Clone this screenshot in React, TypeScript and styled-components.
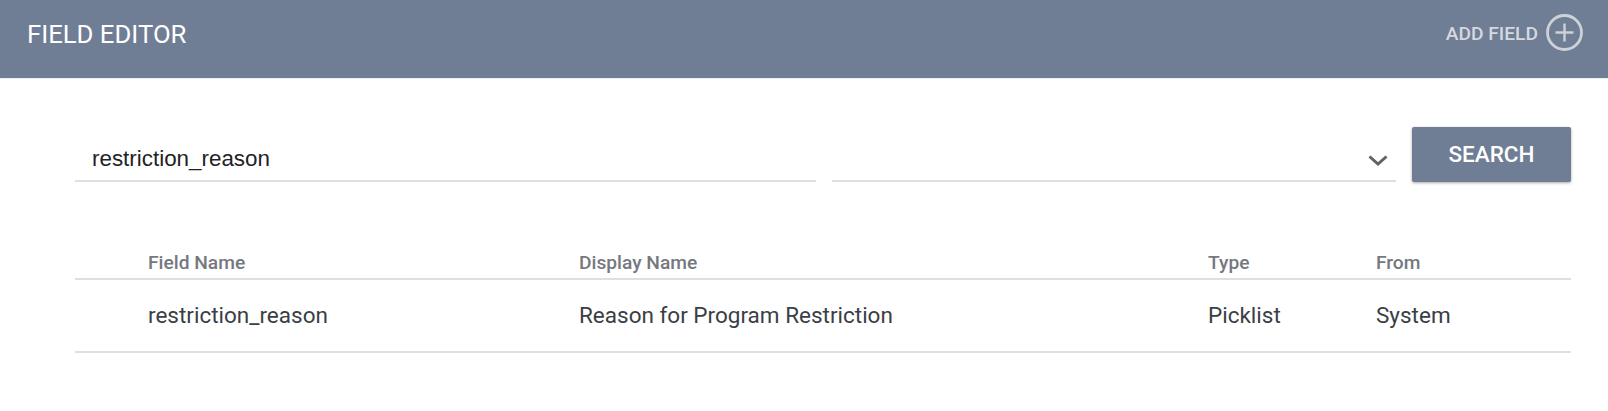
import React from 'react';
import styled, { createGlobalStyle } from 'styled-components';

const GlobalStyle = createGlobalStyle`
  html, body {
    margin: 0;
    padding: 0;
    background: #ffffff;
    font-family: Roboto, 'Liberation Sans', sans-serif;
  }
`;

const Header = styled.header`
  height: 78px;
  background: #6f7d95;
  border-bottom: 1px solid #eceef0;
  display: flex;
  align-items: center;
  justify-content: space-between;
  padding: 0 25px 0 27px;
`;

const Title = styled.div`
  font-size: 25.7px;
  font-weight: 400;
  color: #ffffff;
  margin-top: -10px;
`;

const AddField = styled.button`
  display: flex;
  align-items: center;
  gap: 8px;
  margin-top: -14px;
  padding: 0;
  border: none;
  background: none;
  font-family: inherit;
  font-size: 19.2px;
  font-weight: 500;
  color: #d5d8df;
`;

const AddFieldLabel = styled.span`
  padding-top: 3px;
`;

const Content = styled.main`
  padding: 48px 37px 0 75px;
`;

const SearchRow = styled.div`
  display: flex;
  align-items: stretch;
  height: 55px;
`;

const TextField = styled.div`
  width: 741px;
  margin-right: 16px;
  box-sizing: border-box;
  border-bottom: 2px solid #dedfe2;
  padding: 19px 0 0 17px;
  font-family: 'Liberation Sans', Arial, sans-serif;
  font-size: 22.4px;
  color: #1f2226;
`;

const SelectField = styled.div`
  width: 564px;
  margin-right: 16px;
  box-sizing: border-box;
  border-bottom: 2px solid #dedfe2;
  display: flex;
  justify-content: flex-end;
  align-items: center;
  padding: 14px 8px 0 0;
`;

const SearchButton = styled.button`
  flex: 1;
  border: none;
  border-radius: 2px;
  background: #6f7d95;
  box-shadow: 0 1px 3px rgba(0, 0, 0, 0.35);
  color: #ffffff;
  font-family: inherit;
  font-size: 22.5px;
  font-weight: 500;
  padding-bottom: 3px;
`;

const Grid = styled.div`
  display: grid;
  grid-template-columns: 431px 629px 168px 1fr;
  padding-left: 73px;
`;

const HeadRow = styled(Grid)`
  margin-top: 46px;
  height: 52px;
  align-items: center;
  border-bottom: 2px solid #dedfe2;
  box-sizing: border-box;
  padding-top: 18px;
  font-size: 19.2px;
  font-weight: 500;
  color: #75787f;
`;

const BodyRow = styled(Grid)`
  height: 73px;
  align-items: center;
  border-bottom: 2px solid #dedfe2;
  box-sizing: border-box;
  padding-bottom: 2px;
  font-size: 22.5px;
  color: #3a3e45;
`;

const App = () => (
  <>
    <GlobalStyle />
    <Header>
      <Title>FIELD EDITOR</Title>
      <AddField>
        <AddFieldLabel>ADD FIELD</AddFieldLabel>
        <svg width="37" height="37" viewBox="0 0 37 37" fill="none" stroke="#cdd1d8">
          <circle cx="18.5" cy="18.5" r="17" strokeWidth="2.8" />
          <path d="M18.5 9.5v18M9.5 18.5h18" strokeWidth="2.4" />
        </svg>
      </AddField>
    </Header>
    <Content>
      <SearchRow>
        <TextField>restriction_reason</TextField>
        <SelectField>
          <svg width="20" height="11" viewBox="0 0 20 11" fill="none" stroke="#5f6166" strokeWidth="3">
            <path d="M1.5 1.5l8.5 7.5 8.5-7.5" />
          </svg>
        </SelectField>
        <SearchButton>SEARCH</SearchButton>
      </SearchRow>
      <HeadRow>
        <div>Field Name</div>
        <div>Display Name</div>
        <div>Type</div>
        <div>From</div>
      </HeadRow>
      <BodyRow>
        <div>restriction_reason</div>
        <div>Reason for Program Restriction</div>
        <div>Picklist</div>
        <div>System</div>
      </BodyRow>
    </Content>
  </>
);

export default App;
